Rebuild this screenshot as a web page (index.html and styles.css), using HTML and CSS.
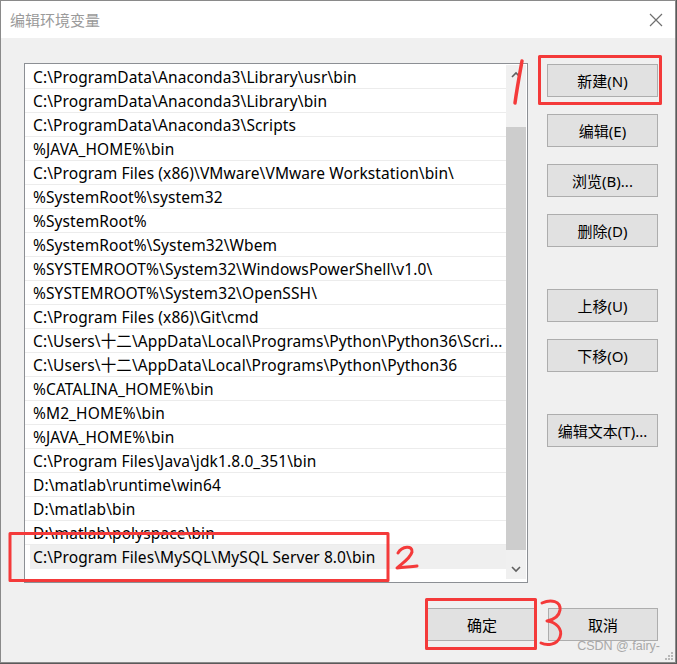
FILE: index.html
```html
<!DOCTYPE html>
<html lang="zh-CN">
<head>
    <meta charset="UTF-8" />
    <title>编辑环境变量</title>
    <link rel="stylesheet" href="styles.css">
</head>
<body>
    <div class="window">
        <div class="titlebar">
            <span class="title">编辑环境变量</span>
            <svg class="close" width="14" height="14" viewBox="0 0 14 14">
                <path d="M1 1 L13 13 M13 1 L1 13" stroke="#707070" stroke-width="1.2" fill="none" />
            </svg>
        </div>

        <div class="content">
            <div class="main">
                <div class="list">
                    <ul class="rows">
                        <li>C:\ProgramData\Anaconda3\Library\usr\bin</li>
                        <li>C:\ProgramData\Anaconda3\Library\bin</li>
                        <li>C:\ProgramData\Anaconda3\Scripts</li>
                        <li>%JAVA_HOME%\bin</li>
                        <li>C:\Program Files (x86)\VMware\VMware Workstation\bin\</li>
                        <li>%SystemRoot%\system32</li>
                        <li>%SystemRoot%</li>
                        <li>%SystemRoot%\System32\Wbem</li>
                        <li>%SYSTEMROOT%\System32\WindowsPowerShell\v1.0\</li>
                        <li>%SYSTEMROOT%\System32\OpenSSH\</li>
                        <li>C:\Program Files (x86)\Git\cmd</li>
                        <li>C:\Users\十二\AppData\Local\Programs\Python\Python36\Scri...</li>
                        <li>C:\Users\十二\AppData\Local\Programs\Python\Python36</li>
                        <li>%CATALINA_HOME%\bin</li>
                        <li>%M2_HOME%\bin</li>
                        <li>%JAVA_HOME%\bin</li>
                        <li>C:\Program Files\Java\jdk1.8.0_351\bin</li>
                        <li>D:\matlab\runtime\win64</li>
                        <li>D:\matlab\bin</li>
                        <li>D:\matlab\polyspace\bin</li>
                        <li class="selected"><span>C:\Program Files\MySQL\MySQL Server 8.0\bin</span></li>
                    </ul>
                    <div class="scrollbar">
                        <svg class="arrow" width="20" height="20" viewBox="0 0 20 20">
                            <path d="M6 12 L10 8 L14 12" stroke="#606060" stroke-width="1.6" fill="none" />
                        </svg>
                        <div class="track">
                            <div class="thumb"></div>
                        </div>
                        <svg class="arrow" width="20" height="20" viewBox="0 0 20 20">
                            <path d="M6 8 L10 12 L14 8" stroke="#606060" stroke-width="1.6" fill="none" />
                        </svg>
                    </div>
                </div>

                <div class="side">
                    <div class="group">
                        <button class="btn">新建(N)</button>
                        <button class="btn">编辑(E)</button>
                        <button class="btn">浏览(B)...</button>
                        <button class="btn">删除(D)</button>
                    </div>
                    <div class="group">
                        <button class="btn">上移(U)</button>
                        <button class="btn">下移(O)</button>
                    </div>
                    <div class="group">
                        <button class="btn">编辑文本(T)...</button>
                    </div>
                </div>
            </div>

            <div class="footer">
                <button class="btn small">确定</button>
                <button class="btn small">取消</button>
            </div>
        </div>

        <div class="watermark">CSDN @.fairy-</div>
        <svg class="grip" width="10" height="10" viewBox="0 0 10 10">
            <rect x="7" y="1" width="2" height="2" fill="#b8b8b8" />
            <rect x="4" y="4" width="2" height="2" fill="#b8b8b8" />
            <rect x="7" y="4" width="2" height="2" fill="#b8b8b8" />
            <rect x="1" y="7" width="2" height="2" fill="#b8b8b8" />
            <rect x="4" y="7" width="2" height="2" fill="#b8b8b8" />
            <rect x="7" y="7" width="2" height="2" fill="#b8b8b8" />
        </svg>

        <!-- red hand drawn marks on top of the screenshot -->
        <svg class="marks" width="677" height="664" viewBox="0 0 677 664">
            <g stroke="#f43a3a" fill="none" stroke-linecap="round" stroke-linejoin="round">
                <rect x="539.5" y="56.5" width="121" height="47" stroke-width="3" stroke-linecap="butt" />
                <rect x="10" y="533.5" width="378" height="47" stroke-width="3" stroke-linecap="butt" />
                <rect x="426.5" y="599.5" width="109" height="49" stroke-width="3" stroke-linecap="butt" />
                <path d="M522 61 C520 72, 517 88, 515 103" stroke-width="3.5" />
                <path d="M398 553 C402 546, 413 545, 412 552 C410 559, 401 564, 397 568 C404 567, 411 567, 417 566" stroke-width="3" />
                <path d="M542 603 C551 599, 561 601, 560 610 C559 617, 552 620, 547 621 C556 622, 563 629, 560 637 C557 645, 547 646, 541 643" stroke-width="3" />
            </g>
        </svg>
    </div>
</body>
</html>
```

FILE: styles.css
```css
* {
    margin: 0;
    padding: 0;
    box-sizing: border-box;
}

body {
    background-color: #5a5a5a;
    font-family: "Noto Sans", "Noto Sans CJK SC", sans-serif;
    font-size: 15px;
    color: #000;
}

.window {
    position: relative;
    width: 676px;
    height: 663px;
    border: 1px solid #8a8a8a;
    background-color: #f0f0f0;
}

.titlebar {
    height: 37px;
    background-color: #fff;
    display: flex;
    align-items: center;
    justify-content: space-between;
    padding: 0 12px 0 9px;
}

.title {
    font-family: "Noto Sans CJK SC", sans-serif;
    font-size: 15px;
    color: #9a9a9a;
}

.content {
    padding: 25px 17px 0 23px;
}

.main {
    display: flex;
    gap: 19px;
}

/* list box */

.list {
    width: 504px;
    height: 520px;
    border: 1px solid #8c8f94;
    background-color: #fff;
    display: flex;
}

.rows {
    list-style: none;
    flex: 1;
    min-width: 0;
    padding-top: 1px;
    font-size: 15.5px;
    letter-spacing: 0.1px;
}

.rows li {
    height: 24px;
    line-height: 24px;
    padding: 0 8px;
    border-bottom: 1px solid #ececec;
    white-space: nowrap;
}

.rows li.selected {
    border-bottom: none;
    padding: 0;
}

.rows li.selected span {
    display: block;
    margin-left: 5px;
    padding-left: 3px;
    height: 24px;
    background-color: #efefef;
}

.scrollbar {
    width: 20px;
    margin: 1px 1px 3px 0;
    background-color: #f0f0f0;
    display: flex;
    flex-direction: column;
}

.arrow {
    display: block;
    flex: none;
}

.track {
    flex: 1;
    padding: 42px 0 9px 0;
}

.thumb {
    height: 100%;
    background-color: #cdcdcd;
}

/* buttons */

.side {
    display: flex;
    flex-direction: column;
    gap: 42px;
    padding-top: 1px;
}

.group {
    display: flex;
    flex-direction: column;
    gap: 17px;
}

.btn {
    width: 111px;
    height: 33px;
    border: 1px solid #adadad;
    background-color: #e1e1e1;
    font-family: "Noto Sans", "Noto Sans CJK SC", sans-serif;
    font-size: 15px;
    color: #000;
}

.btn.small {
    width: 110px;
}

.footer {
    display: flex;
    justify-content: flex-end;
    gap: 11px;
    margin-top: 25px;
}

.watermark {
    position: absolute;
    right: 15px;
    bottom: 9px;
    font-family: "Liberation Sans", sans-serif;
    font-size: 12.5px;
    color: #a8a8a8;
}

.grip {
    position: absolute;
    right: 1px;
    bottom: 1px;
}

.marks {
    position: absolute;
    left: -1px;
    top: -1px;
    pointer-events: none;
}
```
